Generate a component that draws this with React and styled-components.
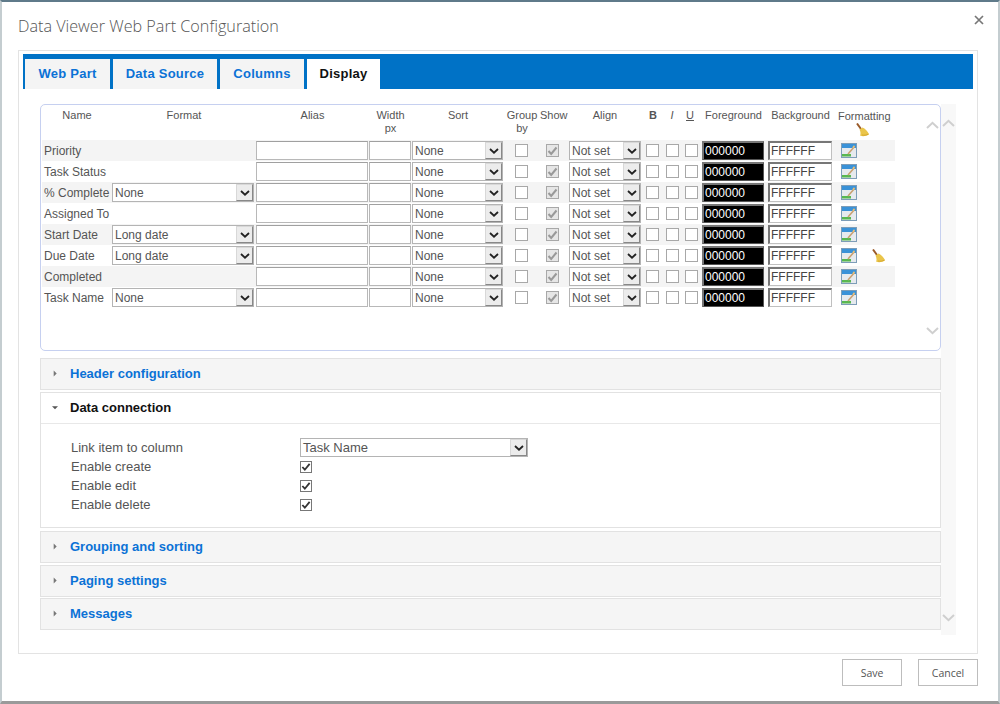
import React from 'react';
import styled, { createGlobalStyle } from 'styled-components';

const GlobalStyle = createGlobalStyle`
  html, body {
    margin: 0;
    padding: 0;
    background: #fff;
    font-family: "Liberation Sans", Arial, sans-serif;
    color: #444;
  }
`;

const Dialog = styled.div`
  width: 1000px;
  height: 704px;
  box-sizing: border-box;
  border-top: 2px solid #5f7a8a;
  border-left: 2px solid #c4cdd0;
  border-right: 2px solid #c4cdd0;
  border-bottom: 3px solid #9a9a9a;
  padding: 0 20px 0 16px;
  display: flex;
  flex-direction: column;
  position: relative;
  overflow: hidden;
`;

const Title = styled.div`
  height: 48px;
  padding-top: 13px;
  box-sizing: border-box;
  font-family: "Open Sans", sans-serif;
  font-size: 16.2px;
  font-weight: 300;
  color: #555;
  line-height: 23px;
`;

const CloseButton = styled.div`
  position: absolute;
  top: 10px;
  right: 13px;
  width: 12px;
  height: 12px;
  color: #777;
`;

const Frame = styled.div`
  height: 604px;
  box-sizing: border-box;
  border: 1px solid #e3e3e3;
  padding: 3px 4px 0 4px;
`;

const TabBar = styled.div`
  height: 35px;
  box-sizing: border-box;
  background: #0072c6;
  padding: 5px 0 0 2px;
  display: flex;
  gap: 3px;
`;

const Tab = styled.div`
  height: 30px;
  box-sizing: border-box;
  padding-bottom: 2px;
  width: ${props => props.w}px;
  background: ${props => (props.active ? '#fff' : '#f4f4f4')};
  color: ${props => (props.active ? '#111' : '#0b72d6')};
  font-size: 13px;
  font-weight: bold;
  letter-spacing: 0.25px;
  display: flex;
  align-items: center;
  justify-content: center;
`;

const Content = styled.div`
  display: flex;
  padding: 15px 0 0 17px;
`;

const MainColumn = styled.div`
  width: 901px;
  display: flex;
  flex-direction: column;
`;

const OuterScroll = styled.div`
  width: 15px;
  height: 531px;
  background: #f8f8f8;
  display: flex;
  flex-direction: column;
  justify-content: space-between;
  align-items: center;
  padding: 15px 0 13px;
  box-sizing: border-box;
`;

const TablePanel = styled.div`
  height: 247px;
  box-sizing: border-box;
  border: 1px solid #c6d0f0;
  border-radius: 5px;
  margin-bottom: 7px;
  padding: 0 0 0 1px;
  display: flex;
`;

const TableBody = styled.div`
  width: 853px;
`;

const InnerScroll = styled.div`
  margin-left: 30px;
  width: 15px;
  display: flex;
  flex-direction: column;
  justify-content: space-between;
  align-items: center;
  padding: 16px 0 15px;
  box-sizing: border-box;
`;

const HeadRow = styled.div`
  display: grid;
  grid-template-columns: 70px 144px 113px 43px 92px 36px 27px 76px 20px 18px 18px 69px 65px 1fr;
  height: 35px;
  font-size: 11px;
  line-height: 13px;
  color: #555;
  text-align: center;
  padding-top: 4px;
  box-sizing: border-box;
`;

const HeadCell = styled.div`
  white-space: nowrap;
  font-weight: ${props => (props.bold ? 'bold' : 'normal')};
  font-style: ${props => (props.italic ? 'italic' : 'normal')};
  text-decoration: ${props => (props.under ? 'underline' : 'none')};
`;

const FormattingHead = styled.div`
  display: flex;
  flex-direction: column;
  align-items: flex-start;
  padding: 1px 0 0 5px;
  line-height: 13px;
`;

const BroomHead = styled.div`
  margin: 0 0 0 18px;
`;

const Row = styled.div`
  display: grid;
  grid-template-columns: 70px 144px 113px 43px 92px 42px 24px 77px 20px 19px 19px 66px 66px 1fr;
  height: 21px;
  align-items: center;
  background: ${props => (props.odd ? '#f4f4f4' : '#fff')};
  font-size: 12px;
  color: #555;
`;

const NameCell = styled.div`
  padding-left: 2px;
  white-space: nowrap;
`;

const Field = styled.div`
  height: 19px;
  width: ${props => props.w}px;
  margin-left: ${props => props.ml || 0}px;
  box-sizing: border-box;
  border: 1px solid #b8b8b8;
  border-top-color: #a0a0a0;
  background: #fff;
`;

const ColorField = styled.div`
  height: 19px;
  width: ${props => props.w}px;
  margin-left: ${props => props.ml || 0}px;
  box-sizing: border-box;
  border: 1px solid ${props => (props.dark ? '#555' : '#c0c0c0')};
  border-top: 2px solid #777;
  border-left: 2px solid #777;
  background: ${props => (props.dark ? '#000' : '#fff')};
  color: ${props => (props.dark ? '#fff' : '#444')};
  font-size: 12px;
  line-height: 16px;
  padding-left: 1px;
`;

const SelectBox = styled.div`
  height: ${props => props.h || 19}px;
  width: ${props => props.w}px;
  margin-left: ${props => props.ml || 0}px;
  box-sizing: border-box;
  border: 1px solid #b4b4b4;
  background: #fff;
  display: flex;
  align-items: center;
  justify-content: space-between;
  padding-left: 2px;
  font-size: ${props => props.fs || 12}px;
  color: #555;
`;

const SelectArrow = styled.div`
  width: 17px;
  height: 100%;
  box-sizing: border-box;
  background: #ececec;
  border: 1px solid #d8d8d8;
  border-right-color: #888;
  border-bottom-color: #888;
  display: flex;
  align-items: center;
  justify-content: center;
`;

const Check = styled.div`
  width: ${props => props.s || 13}px;
  height: ${props => props.s || 13}px;
  margin-left: ${props => props.ml || 0}px;
  box-sizing: border-box;
  border: 1px solid ${props => (props.strong ? '#777' : '#a8a8a8')};
  background: ${props => (props.disabled ? '#e6e6e6' : '#fff')};
  display: flex;
  align-items: center;
  justify-content: center;
`;

const IconCell = styled.div`
  display: flex;
  align-items: center;
  gap: 15px;
  padding-left: 4px;
`;

const Section = styled.div`
  border: 1px solid #e2e2e2;
  margin-bottom: ${props => props.mb ?? 2}px;
  background: ${props => (props.open ? '#fff' : '#f5f5f5')};
`;

const SectionHead = styled.div`
  height: ${props => props.h || 30}px;
  box-sizing: border-box;
  display: flex;
  align-items: center;
  padding: 0 0 2px 11px;
  gap: 12px;
  font-size: 13px;
  font-weight: bold;
  color: ${props => (props.open ? '#111' : '#0b72d6')};
  border-bottom: ${props => (props.open ? '1px solid #e8e8e8' : 'none')};
`;

const SectionArrow = styled.div`
  width: 6px;
  display: flex;
  justify-content: center;
`;

const SectionBody = styled.div`
  padding: 14px 0 13px 30px;
  display: grid;
  grid-template-columns: 229px 1fr;
  grid-auto-rows: 19px;
  align-items: center;
  font-size: 13px;
  color: #555;
`;

const Footer = styled.div`
  display: flex;
  justify-content: flex-end;
  gap: 16px;
  padding-top: 5px;
`;

const Button = styled.div`
  width: 60px;
  height: 27px;
  box-sizing: border-box;
  border: 1px solid #bdbdbd;
  background: #fff;
  font-family: "Open Sans", sans-serif;
  font-size: 10.5px;
  color: #555;
  display: flex;
  align-items: center;
  justify-content: center;
`;

const Chevron = ({ up, color = '#cfcfcf' }) => (
  <svg width="13" height="8" viewBox="0 0 13 8" fill="none">
    <path d={up ? 'M1 7L6.5 1.8L12 7' : 'M1 1L6.5 6.2L12 1'} stroke={color} strokeWidth="2" />
  </svg>
);

const SmallArrow = () => (
  <svg width="10" height="6" viewBox="0 0 10 6" fill="none">
    <path d="M1 1L5 4.7L9 1" stroke="#222" strokeWidth="1.8" />
  </svg>
);

const Tick = ({ color }) => (
  <svg width="11" height="10" viewBox="0 0 11 10" fill="none">
    <path d="M1.5 5L4.2 8L9.5 1.5" stroke={color} strokeWidth="2" />
  </svg>
);

const EditIcon = () => (
  <svg width="16" height="15" viewBox="0 0 16 15">
    <rect x="0.5" y="0.5" width="15" height="14" fill="#e6eaee" stroke="#7d9db8" />
    <rect x="1" y="1" width="14" height="4" fill="#3a92d8" />
    <rect x="1" y="11" width="9" height="2.5" fill="#58b850" />
    <path d="M7 11L13.5 3.5" stroke="#c9a070" strokeWidth="1.6" />
    <path d="M11.8 4.8L13.5 2.8" stroke="#e8c078" strokeWidth="1.4" />
  </svg>
);

const Broom = () => (
  <svg width="14" height="14" viewBox="0 0 14 14">
    <path d="M1 0.5L5 6" stroke="#9a5a28" strokeWidth="2" />
    <path d="M3.5 6.5L6.5 4.5C9 5.5 12 8.5 13 11.5C10 13.5 6 13.5 4 12.5C5 11 4.5 8.5 3.5 6.5Z" fill="#eac54a" />
    <path d="M6 12C8 12.5 10.5 12.2 12.5 11" stroke="#d6a92e" strokeWidth="1" fill="none" />
  </svg>
);

const Triangle = ({ down, color = '#777' }) => (
  <svg width="7" height="7" viewBox="0 0 7 7">
    <path d={down ? 'M0 2H7L3.5 5.5Z' : 'M2 0V7L5.5 3.5Z'} fill={color} />
  </svg>
);

const Select = ({ value, w, ml, h, fs }) => (
  <SelectBox w={w} ml={ml} h={h} fs={fs}>
    {value}
    <SelectArrow>
      <SmallArrow />
    </SelectArrow>
  </SelectBox>
);

const rows = [
  { name: 'Priority' },
  { name: 'Task Status' },
  { name: '% Complete', format: 'None' },
  { name: 'Assigned To' },
  { name: 'Start Date', format: 'Long date' },
  { name: 'Due Date', format: 'Long date', broom: true },
  { name: 'Completed' },
  { name: 'Task Name', format: 'None' },
];

const tabs = [
  { label: 'Web Part', w: 85 },
  { label: 'Data Source', w: 104 },
  { label: 'Columns', w: 84 },
  { label: 'Display', w: 73, active: true },
];

const links = [
  { label: 'Link item to column' },
  { label: 'Enable create' },
  { label: 'Enable edit' },
  { label: 'Enable delete' },
];

export default function App() {
  return (
    <>
      <GlobalStyle />
      <Dialog>
        <Title>Data Viewer Web Part Configuration</Title>
        <CloseButton>
          <svg width="12" height="12" viewBox="0 0 12 12">
            <path d="M2 2L10 10M10 2L2 10" stroke="#777" strokeWidth="1.7" />
          </svg>
        </CloseButton>
        <Frame>
          <TabBar>
            {tabs.map(tab => (
              <Tab key={tab.label} w={tab.w} active={tab.active}>
                {tab.label}
              </Tab>
            ))}
          </TabBar>
          <Content>
            <MainColumn>
              <TablePanel>
                <TableBody>
                  <HeadRow>
                    <HeadCell>Name</HeadCell>
                    <HeadCell>Format</HeadCell>
                    <HeadCell>Alias</HeadCell>
                    <HeadCell>Width<br />px</HeadCell>
                    <HeadCell>Sort</HeadCell>
                    <HeadCell>Group<br />by</HeadCell>
                    <HeadCell>Show</HeadCell>
                    <HeadCell>Align</HeadCell>
                    <HeadCell bold>B</HeadCell>
                    <HeadCell italic>I</HeadCell>
                    <HeadCell under>U</HeadCell>
                    <HeadCell>Foreground</HeadCell>
                    <HeadCell>Background</HeadCell>
                    <FormattingHead>
                      Formatting
                      <BroomHead><Broom /></BroomHead>
                    </FormattingHead>
                  </HeadRow>
                  {rows.map((row, i) => (
                    <Row key={row.name} odd={i % 2 === 0}>
                      <NameCell>{row.name}</NameCell>
                      {row.format ? <Select value={row.format} w={142} /> : <div />}
                      <Field w={112} />
                      <Field w={42} />
                      <Select value="None" w={91} />
                      <Check ml={11} />
                      <Check disabled>
                        <Tick color="#999" />
                      </Check>
                      <Select value="Not set" w={72} ml={-1} />
                      <Check ml={-1} />
                      <Check ml={-1} />
                      <Check ml={-1} />
                      <ColorField dark w={62} ml={-3}>000000</ColorField>
                      <ColorField w={64} ml={-3}>FFFFFF</ColorField>
                      <IconCell>
                        <EditIcon />
                        {row.broom && <Broom />}
                      </IconCell>
                    </Row>
                  ))}
                </TableBody>
                <InnerScroll>
                  <Chevron up />
                  <Chevron />
                </InnerScroll>
              </TablePanel>

              <Section>
                <SectionHead>
                  <SectionArrow><Triangle /></SectionArrow>
                  Header configuration
                </SectionHead>
              </Section>

              <Section open mb={3}>
                <SectionHead open h={31}>
                  <SectionArrow><Triangle down color="#555" /></SectionArrow>
                  Data connection
                </SectionHead>
                <SectionBody>
                  {links.map((link, i) => (
                    <React.Fragment key={link.label}>
                      <div>{link.label}</div>
                      {i === 0 ? (
                        <Select value="Task Name" w={228} h={19} fs={13} />
                      ) : (
                        <Check s={12} strong>
                          <Tick color="#333" />
                        </Check>
                      )}
                    </React.Fragment>
                  ))}
                </SectionBody>
              </Section>

              <Section>
                <SectionHead>
                  <SectionArrow><Triangle /></SectionArrow>
                  Grouping and sorting
                </SectionHead>
              </Section>
              <Section mb={1}>
                <SectionHead>
                  <SectionArrow><Triangle /></SectionArrow>
                  Paging settings
                </SectionHead>
              </Section>
              <Section mb={0}>
                <SectionHead>
                  <SectionArrow><Triangle /></SectionArrow>
                  Messages
                </SectionHead>
              </Section>
            </MainColumn>
            <OuterScroll>
              <Chevron up />
              <Chevron />
            </OuterScroll>
          </Content>
        </Frame>
        <Footer>
          <Button>Save</Button>
          <Button>Cancel</Button>
        </Footer>
      </Dialog>
    </>
  );
}
